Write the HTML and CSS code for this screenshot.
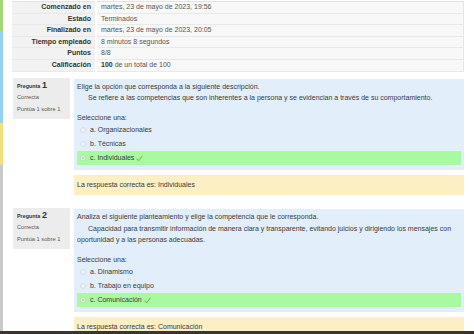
FILE: index.html
```html
<!DOCTYPE html>
<html lang="es">
<head>
<meta charset="utf-8">
<title>Revisión del intento</title>
<link rel="stylesheet" href="styles.css">
</head>
<body>
<div class="page">
  <div class="strip">
    <div class="seg seg-green"></div>
    <div class="seg seg-blue"></div>
    <div class="seg seg-yellow"></div>
    <div class="seg seg-gray"></div>
  </div>
  <main class="main">
    <table class="summary">
      <tr><th>Comenzado en</th><td>martes, 23 de mayo de 2023, 19:56</td></tr>
      <tr><th>Estado</th><td>Terminados</td></tr>
      <tr><th>Finalizado en</th><td>martes, 23 de mayo de 2023, 20:05</td></tr>
      <tr><th>Tiempo empleado</th><td>8 minutos 8 segundos</td></tr>
      <tr><th>Puntos</th><td>8/8</td></tr>
      <tr><th>Calificación</th><td><b>100</b> de un total de 100</td></tr>
    </table>

    <div class="que">
      <div class="info">
        <div class="qno">Pregunta <span class="num">1</span></div>
        <div class="state">Correcta</div>
        <div class="grade">Puntúa 1 sobre 1</div>
      </div>
      <div class="content">
        <div class="formulation">
          <div class="qtext">
            <p>Elige la opción que corresponda a la siguiente descripción.</p>
            <p class="indent">Se refiere a las competencias que son inherentes a la persona y se evidencian a través de su comportamiento.</p>
          </div>
          <div class="prompt">Seleccione una:</div>
          <div class="answer">
            <div class="opt"><span class="radio"></span>a. Organizacionales</div>
            <div class="opt"><span class="radio"></span>b. Técnicas</div>
            <div class="opt correct"><span class="radio checked"></span>c. Individuales <svg class="tick" viewBox="0 0 10 10" width="7" height="7"><path d="M1.2 5.6 L3.8 8.2 L8.8 1.6" fill="none" stroke="#79c454" stroke-width="1.5" stroke-linecap="round" stroke-linejoin="round"/></svg></div>
          </div>
        </div>
        <div class="feedback">La respuesta correcta es: Individuales</div>
      </div>
    </div>

    <div class="que">
      <div class="info">
        <div class="qno">Pregunta <span class="num">2</span></div>
        <div class="state">Correcta</div>
        <div class="grade">Puntúa 1 sobre 1</div>
      </div>
      <div class="content">
        <div class="formulation">
          <div class="qtext">
            <p>Analiza el siguiente planteamiento y elige la competencia que le corresponda.</p>
            <p class="indent">Capacidad para transmitir información de manera clara y transparente, evitando juicios y dirigiendo los mensajes con oportunidad y a las personas adecuadas.</p>
          </div>
          <div class="prompt">Seleccione una:</div>
          <div class="answer">
            <div class="opt"><span class="radio"></span>a. Dinamismo</div>
            <div class="opt"><span class="radio"></span>b. Trabajo en equipo</div>
            <div class="opt correct"><span class="radio checked"></span>c. Comunicación <svg class="tick" viewBox="0 0 10 10" width="7" height="7"><path d="M1.2 5.6 L3.8 8.2 L8.8 1.6" fill="none" stroke="#79c454" stroke-width="1.5" stroke-linecap="round" stroke-linejoin="round"/></svg></div>
          </div>
        </div>
        <div class="feedback">La respuesta correcta es: Comunicación</div>
      </div>
    </div>
  </main>
</div>
<div class="taskbar"></div>
</body>
</html>
```

FILE: styles.css
```css
* { box-sizing: border-box; }
html, body { margin: 0; padding: 0; background: #fff; }
body {
  font-family: "Liberation Sans", Arial, sans-serif;
  font-size: 7px;
  color: #3a3a3a;
  overflow: hidden;
  height: 334px;
}
.page {
  display: flex;
  min-height: 334px;
}
.strip {
  width: 3px;
  flex: none;
  display: flex;
  flex-direction: column;
}
.seg-green { height: 31px; background: #a6d672; }
.seg-blue { height: 92px; background: #93d1ef; }
.seg-yellow { height: 42px; background: #f3df7e; }
.seg-gray { flex: 1; background: #c9c9c9; }

.main {
  flex: 1;
  padding: 1px 10px 0 9px;
}

.summary {
  width: 100%;
  border-collapse: collapse;
  border-top: 1px solid #e2e2e2;
  border-right: 1px solid #e6e6e6;
  margin-bottom: 7px;
}
.summary th, .summary td {
  line-height: 10.6px;
  padding: 0;
  border-bottom: 1px solid #e9e9e9;
  font-size: 7px;
}
.summary th {
  width: 84px;
  text-align: right;
  padding-right: 4px;
  font-weight: bold;
  color: #333;
  background: #f2f2f2;
}
.summary td {
  padding-left: 4px;
  background: #f8f8f8;
  color: #555;
  border-left: 2px solid #fff;
}
.summary td b { color: #333; }

.que {
  display: flex;
  gap: 4px;
  margin-bottom: 14px;
}
.info {
  width: 57px;
  flex: none;
  align-self: flex-start;
  margin-top: -1px;
  margin-left: 1px;
  background: #ececec;
  padding: 3px 4px 4px;
  color: #555;
}
.qno {
  font-size: 5.4px;
  font-weight: bold;
  color: #333;
  line-height: 9px;
}
.qno .num {
  font-size: 9px;
}
.state, .grade {
  font-size: 5.7px;
  line-height: 12px;
}

.content { flex: 1; }
.formulation {
  background: #e2eef9;
  padding: 2px 3px 5px 3px;
  color: #3a3a3a;
}
.qtext p {
  margin: 0;
  line-height: 11.5px;
}
.qtext .indent { text-indent: 11px; }
.prompt {
  margin-top: 8px;
  line-height: 11.5px;
}
.opt {
  height: 14px;
  line-height: 14px;
  display: flex;
  align-items: center;
  padding-left: 3px;
}
.opt.correct { background: #a9f9a1; }
.radio {
  width: 6px;
  height: 6px;
  border-radius: 50%;
  border: 1px solid #d5dde4;
  background: #eef3f7;
  margin-right: 4px;
  flex: none;
}
.radio.checked {
  border-color: #c7dcc4;
  background: radial-gradient(circle, #c9d4c8 0 1.4px, #e9f2e8 1.6px);
}
.tick { margin-left: 2px; margin-top: 1px; }

.feedback {
  margin-top: 5px;
  background: #fdefc4;
  height: 20px;
  line-height: 20px;
  padding-left: 3px;
  color: #3a3a3a;
}

.taskbar {
  position: fixed;
  left: 0;
  right: 0;
  bottom: 0;
  height: 3px;
  background: #3b3532;
}
```
